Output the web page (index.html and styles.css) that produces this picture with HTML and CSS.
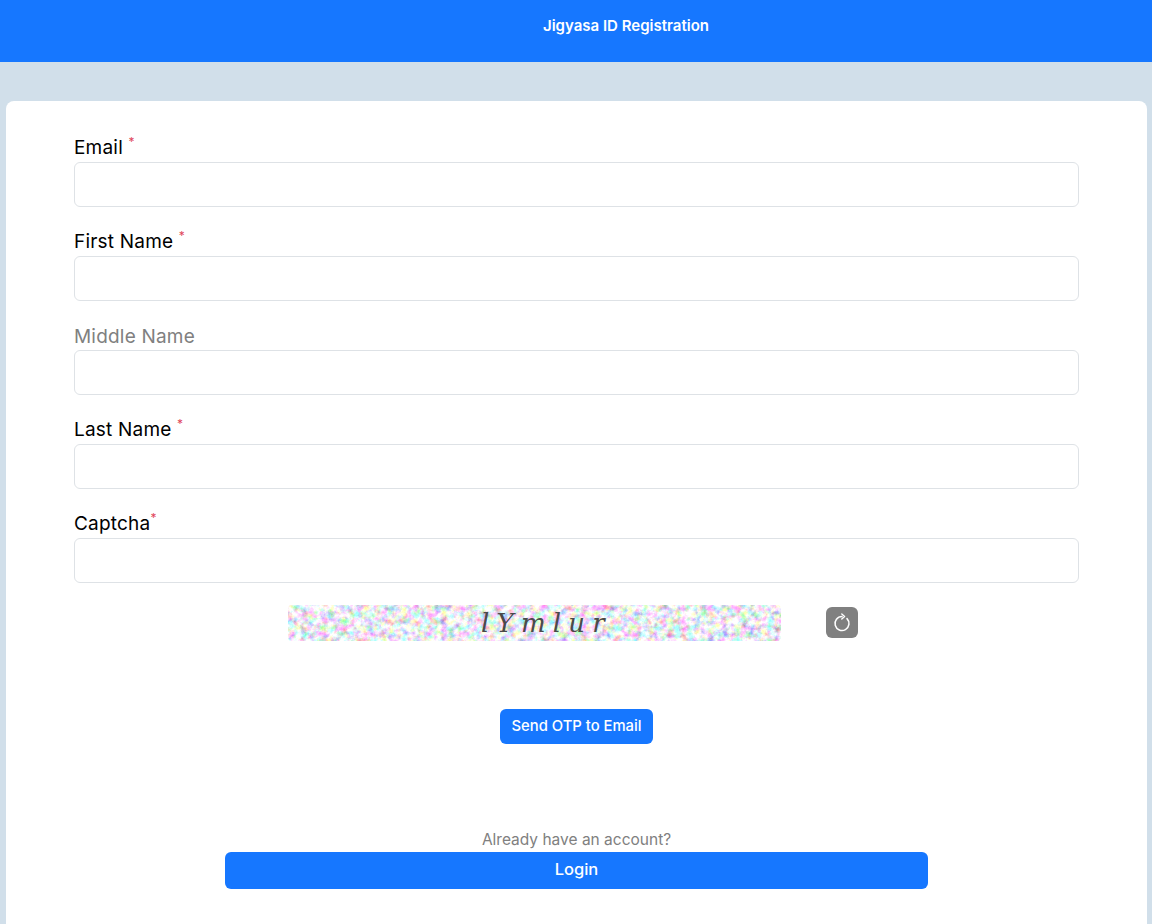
FILE: index.html
```html
<!DOCTYPE html>
<html lang="en">
<head>
<meta charset="utf-8">
<title>Jigyasa ID Registration</title>
<link rel="stylesheet" href="styles.css">
</head>
<body>
<header class="topbar"><h1 class="topbar-title">Jigyasa ID Registration</h1></header>
<main class="card">
  <form class="form">
    <div class="field"><label class="label">Email <sup class="req">*</sup></label><input class="input" type="text"></div>
    <div class="field"><label class="label">First Name <sup class="req">*</sup></label><input class="input" type="text"></div>
    <div class="field"><label class="label label-muted">Middle Name</label><input class="input" type="text"></div>
    <div class="field"><label class="label">Last Name <sup class="req">*</sup></label><input class="input" type="text"></div>
    <div class="field"><label class="label">Captcha<sup class="req">*</sup></label><input class="input" type="text"></div>
    <div class="captcha-row">
      <div class="captcha">
        <svg class="captcha-noise" width="493" height="36" aria-hidden="true">
          <filter id="noise" x="0" y="0" width="100%" height="100%" color-interpolation-filters="sRGB">
            <feTurbulence type="fractalNoise" baseFrequency="0.15" numOctaves="4" seed="11"/>
            <feColorMatrix type="matrix" values="1 0 0 0 0.42  0 1 0 0 0.42  0 0 0.9 0 0.5  0 0 0 0 1"/>
          </filter>
          <rect width="493" height="36" filter="url(#noise)"/>
        </svg>
        <span class="captcha-text">lYmlur</span>
      </div>
      <button class="refresh" type="button" aria-label="Refresh captcha">
        <svg width="20" height="20" viewBox="0 0 20 20" fill="none" stroke="#fff" stroke-width="1.5" stroke-linecap="round" stroke-linejoin="round">
          <path d="M10 3.5A7 7 0 1 0 15 5.6"/>
          <path d="M9.8 1 12.6 3.5 9.8 6" stroke-width="1.4"/>
        </svg>
      </button>
    </div>
    <div class="otp-row"><button class="btn btn-otp" type="button">Send OTP to Email</button></div>
    <p class="already">Already have an account?</p>
    <div class="login-row"><button class="btn btn-login" type="button">Login</button></div>
  </form>
</main>
</body>
</html>
```

FILE: styles.css
```css
* { box-sizing: border-box; }
html, body { margin: 0; height: 924px; overflow: hidden; }
body { background: #d1dfea; font-family: Inter, "Liberation Sans", sans-serif; color: #000; }

.topbar { height: 62px; background: #1677ff; display: flex; justify-content: center; padding: 16px 0 0 100px; }
.topbar-title { margin: 0; font-size: 15px; line-height: 20px; font-weight: 600; color: #fff; }

.card { margin: 39px 5px 0 6px; padding: 34px 68px 35px; background: #fff; border-radius: 8px 8px 0 0; height: 823px; }
.form { display: flex; flex-direction: column; }
.field { display: flex; flex-direction: column; margin-bottom: 22px; }
.label { height: 27px; font-size: 19px; line-height: 26px; letter-spacing: .2px; white-space: nowrap; }
.label-muted { color: #808080; line-height: 27px; }
.req { color: #e0455a; font-size: 12px; line-height: 0; vertical-align: 8px; }
.input { display: block; width: 100%; height: 45px; border: 1px solid #dee2e6; border-radius: 6px; background: #fff; }

.captcha-row { display: flex; justify-content: center; align-items: flex-start; gap: 45px; padding-right: 7px; }
.captcha { position: relative; width: 493px; height: 36px; border-radius: 4px; overflow: hidden; }
.captcha-noise { display: block; }
.captcha-text { position: absolute; left: 193px; top: 0; font-family: "DejaVu Serif", serif; font-style: italic; font-size: 26px; line-height: 36px; letter-spacing: 7.2px; color: #4a4a4a; }
.refresh { width: 32px; height: 31px; margin-top: 2px; padding: 0; border: 0; border-radius: 6px; background: #808080; display: flex; align-items: center; justify-content: center; }

.otp-row { display: flex; justify-content: center; margin-top: 68px; }
.btn { border: 0; background: #1677ff; color: #fff; font-family: inherit; font-weight: 500; }
.btn-otp { width: 153px; height: 35px; padding: 0 0 2px; border-radius: 6px; font-size: 14.8px; }
.already { margin: 84px 0 0; height: 24px; font-size: 15.5px; line-height: 24px; color: #808080; text-align: center; }
.login-row { display: flex; justify-content: center; }
.btn-login { width: 703px; height: 37px; padding: 0 0 3px; border-radius: 6px; font-size: 16.5px; }
```
